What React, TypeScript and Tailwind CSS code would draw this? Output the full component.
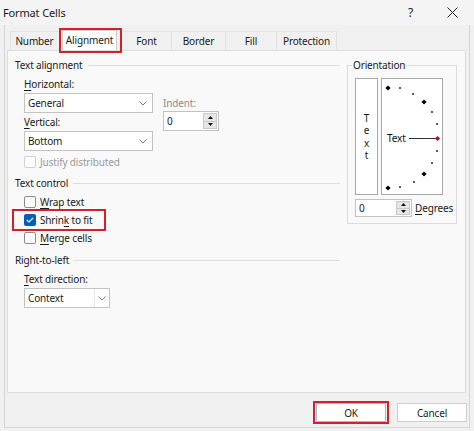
import React from "react";

const FONT = { fontFamily: '"Noto Sans", "Open Sans", sans-serif' };

function Chevron() {
  return (
    <svg width="8" height="5" viewBox="0 0 8 5" className="shrink-0">
      <polyline points="0.5,0.5 4,4 7.5,0.5" fill="none" stroke="#7a7a7a" strokeWidth="1" />
    </svg>
  );
}

function Select({ value, w, divider }: { value: string; w: string; divider?: boolean }) {
  return (
    <div className={`${w} h-[20px] bg-white border border-[#c2c2c2] flex items-center`}>
      <span className="flex-1 pl-[3px] leading-none">{value}</span>
      {divider ? (
        <div className="h-full w-[15px] border-l border-[#e6e6e6] flex items-center justify-center">
          <Chevron />
        </div>
      ) : (
        <div className="pr-[5px] flex items-center">
          <Chevron />
        </div>
      )}
    </div>
  );
}

function SpinButtons() {
  return (
    <div className="w-[15px] h-full flex flex-col py-[1px] pr-[1px] gap-0">
      <div className="flex-1 bg-[#e6e6e6] border border-[#c9c9c9] flex items-center justify-center">
        <svg width="5" height="3" viewBox="0 0 5 3">
          <polygon points="2.5,0 5,3 0,3" fill="#111" />
        </svg>
      </div>
      <div className="flex-1 bg-[#e6e6e6] border border-[#c9c9c9] border-t-0 flex items-center justify-center">
        <svg width="5" height="3" viewBox="0 0 5 3">
          <polygon points="0,0 5,0 2.5,3" fill="#111" />
        </svg>
      </div>
    </div>
  );
}

function Spinner({ w, h }: { w: string; h: string }) {
  return (
    <div className={`${w} ${h} bg-white border border-[#c2c2c2] flex items-center`}>
      <span className="flex-1 pl-[3px] leading-none">0</span>
      <SpinButtons />
    </div>
  );
}

function Check({ checked, disabled }: { checked?: boolean; disabled?: boolean }) {
  if (checked) {
    return (
      <div className="w-[12px] h-[12px] rounded-[2px] bg-[#005fb8] flex items-center justify-center shrink-0">
        <svg width="8" height="6" viewBox="0 0 8 6">
          <polyline points="0.8,3 3,5 7.2,0.8" fill="none" stroke="#fff" strokeWidth="1.2" />
        </svg>
      </div>
    );
  }
  return (
    <div
      className={`w-[12px] h-[12px] rounded-[2px] bg-white border shrink-0 ${
        disabled ? "border-[#d0d0d0]" : "border-[#8c8c8c]"
      }`}
    />
  );
}

function GroupHeader({ label }: { label: string }) {
  return (
    <div className="h-[14px] flex items-center gap-[5px]">
      <span className="leading-none">{label}</span>
      <div className="flex-1 h-px bg-[#dedede]" />
    </div>
  );
}

function U({ children }: { children: React.ReactNode }) {
  return <span className="underline underline-offset-[2px] decoration-[0.5px]">{children}</span>;
}

function Orientation() {
  const diamonds: [number, number][] = [
    [6, 9],
    [42, 23],
    [42, 95],
    [6, 109],
  ];
  const dots: [number, number][] = [
    [18, 9],
    [31, 15],
    [50, 33],
    [55, 45],
    [55, 72],
    [50, 84],
    [32, 103],
    [18, 108],
  ];
  const d = (cx: number, cy: number, r: number) =>
    `${cx},${cy - r} ${cx + r},${cy} ${cx},${cy + r} ${cx - r},${cy}`;
  return (
    <svg width="60" height="115" viewBox="0 0 60 115">
      {diamonds.map(([x, y], i) => (
        <polygon key={i} points={d(x, y, 2.6)} fill="#000" />
      ))}
      {dots.map(([x, y], i) => (
        <rect key={i} x={x - 0.8} y={y - 0.8} width="1.6" height="1.6" fill="#000" />
      ))}
      <text x="5" y="63" fontSize="10" fill="#111" style={FONT}>
        Text
      </text>
      <line x1="27" y1="59.5" x2="54" y2="59.5" stroke="#333" strokeWidth="1" />
      <polygon points={d(55.5, 59.5, 2.6)} fill="#a4172b" />
    </svg>
  );
}

export default function App() {
  return (
    <div
      className="w-[474px] h-[431px] bg-[#f0f0f0] flex flex-col text-[10px] text-[#1a1a1a] tracking-[-0.15px] overflow-hidden"
      style={FONT}
    >
      {/* Title bar */}
      <div className="h-[25px] bg-[#f4f4f4] flex items-center pl-[3px] pr-[16px]">
        <span className="text-[11px] flex-1 leading-none">Format Cells</span>
        <span className="text-[12px] leading-none mr-[34px] text-[#222]">?</span>
        <svg width="11" height="11" viewBox="0 0 11 11">
          <line x1="0.5" y1="0.5" x2="10.5" y2="10.5" stroke="#222" strokeWidth="1" />
          <line x1="10.5" y1="0.5" x2="0.5" y2="10.5" stroke="#222" strokeWidth="1" />
        </svg>
      </div>

      {/* Window body */}
      <div className="ml-[4px] w-[466px] h-[403px] border-l border-r border-b border-[#d6d6d6] pl-[2px] pr-[3px] flex flex-col">
        {/* Tabs */}
        <div className="h-[25px] flex items-end pl-[3px]">
          <div className="w-[48px] h-[19px] flex items-center justify-center border-t border-l border-[#e2e2e2]">
            Number
          </div>
          <div className="relative ml-[4px] w-[55px] h-[20px] bg-white border border-b-0 border-[#cfcfcf] flex items-center justify-center mr-[4px]">
            Alignment
            <div className="absolute -left-[4px] -top-[3px] w-[63px] h-[25px] border-2 border-[#d4202a] z-10" />
          </div>
          <div className="w-[50px] h-[19px] flex items-center justify-center border-t border-l border-[#e2e2e2]">
            Font
          </div>
          <div className="w-[54px] h-[19px] flex items-center justify-center border-t border-l border-[#e2e2e2]">
            Border
          </div>
          <div className="w-[51px] h-[19px] flex items-center justify-center border-t border-l border-[#e2e2e2]">
            Fill
          </div>
          <div className="w-[61px] h-[19px] flex items-center justify-center border-t border-l border-r border-[#e2e2e2]">
            Protection
          </div>
        </div>

        {/* Panel */}
        <div className="h-[343px] bg-[#f9f9f9] border border-[#dcdcdc] flex pl-[7px] pr-[7px]">
          {/* Left column */}
          <div className="w-[325px] flex flex-col pt-[7px]">
            <GroupHeader label="Text alignment" />
            <div className="pl-[9px] pt-[5px] flex">
              <div className="w-[129px] flex flex-col">
                <div className="h-[14px] flex items-center leading-none">
                  <span>
                    <U>H</U>orizontal:
                  </span>
                </div>
                <div className="mt-[2px]">
                  <Select value="General" w="w-[129px]" />
                </div>
                <div className="mt-[2px] h-[14px] flex items-center leading-none">
                  <span>
                    <U>V</U>ertical:
                  </span>
                </div>
                <div className="mt-[2px]">
                  <Select value="Bottom" w="w-[129px]" />
                </div>
                <div className="mt-[5px] h-[12px] flex items-center gap-[4px] text-[#9a9a9a]">
                  <Check disabled />
                  <span className="leading-none">Justify distributed</span>
                </div>
              </div>
              <div className="ml-[10px] flex flex-col">
                <div className="mt-[19px] h-[14px] flex items-center leading-none text-[#8c8c8c]">
                  Indent:
                </div>
                <div className="mt-[1px]">
                  <Spinner w="w-[56px]" h="h-[20px]" />
                </div>
              </div>
            </div>

            <div className="mt-[8px]">
              <GroupHeader label="Text control" />
            </div>
            <div className="pl-[9px] mt-[3px] flex flex-col">
              <div className="h-[18px] flex items-center gap-[4px]">
                <Check />
                <span className="leading-none">
                  <U>W</U>rap text
                </span>
              </div>
              <div className="relative h-[18px] flex items-center gap-[4px]">
                <div className="absolute -left-[12px] -top-[2px] w-[94px] h-[22px] border-2 border-[#d4202a]" />
                <Check checked />
                <span className="leading-none">
                  Shrin<U>k</U> to fit
                </span>
              </div>
              <div className="h-[18px] flex items-center gap-[4px]">
                <Check />
                <span className="leading-none">
                  <U>M</U>erge cells
                </span>
              </div>
            </div>

            <div className="mt-[6px]">
              <GroupHeader label="Right-to-left" />
            </div>
            <div className="pl-[9px] mt-[5px] flex flex-col">
              <div className="h-[14px] flex items-center leading-none">
                <span>
                  <U>T</U>ext direction:
                </span>
              </div>
              <div className="mt-[2px]">
                <Select value="Context" w="w-[86px]" divider />
              </div>
            </div>
          </div>

          {/* Right column: Orientation */}
          <div className="ml-[7px] w-[110px] pt-[14px]">
            <div className="relative border border-[#dcdcdc] pt-[12px] pl-[7px] pb-[6px] flex flex-col">
              <span className="absolute left-[4px] -top-[8px] px-[1px] bg-[#f9f9f9] leading-[14px]">
                Orientation
              </span>
              <div className="flex gap-[3px]">
                <div className="w-[23px] h-[117px] bg-white border border-[#a8a8a8] flex flex-col items-center justify-center leading-[12.5px]">
                  <span>T</span>
                  <span>e</span>
                  <span>x</span>
                  <span>t</span>
                </div>
                <div className="w-[62px] h-[117px] bg-white border border-[#a8a8a8]">
                  <Orientation />
                </div>
              </div>
              <div className="mt-[4px] flex items-center gap-[3px]">
                <Spinner w="w-[57px]" h="h-[18px]" />
                <span className="leading-none">
                  <U>D</U>egrees
                </span>
              </div>
            </div>
          </div>
        </div>

        {/* Buttons */}
        <div className="flex-1 flex items-start justify-end pt-[8px] -mr-[1px] gap-[8px]">
          <div className="border-2 border-[#d4202a] px-[1px]">
            <div className="w-[70px] h-[19px] bg-white border border-[#9fb9d9] flex items-center justify-center leading-none">
              OK
            </div>
          </div>
          <div className="mt-[2px] w-[70px] h-[19px] bg-white border border-[#cfcfcf] flex items-center justify-center leading-none">
            Cancel
          </div>
        </div>
      </div>
    </div>
  );
}
